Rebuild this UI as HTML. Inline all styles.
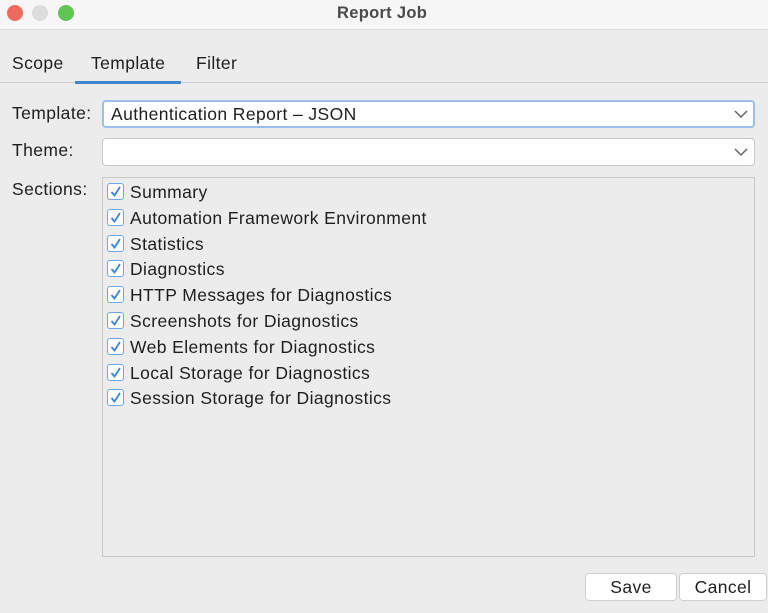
<!DOCTYPE html>
<html><head><style>
*{margin:0;padding:0;box-sizing:border-box}
body{width:768px;height:613px;background:#ececec;font-family:"Liberation Sans",sans-serif;color:#1e1e1e;position:relative;overflow:hidden}
.abs{position:absolute}
.title{left:0;top:0;width:768px;height:30px;background:#f6f6f6;border-bottom:1px solid #e0dcdc}
.dot{width:16px;height:16px;border-radius:50%;top:5px}
.t{font-size:17.5px;letter-spacing:0.4px;white-space:nowrap}
.combo{left:102px;width:653px;height:28px;background:#fff;border:1px solid #c8c8c8;border-radius:4px}
.cb{left:107px;width:17px;height:17px;border:1px solid #6fa6e6;border-radius:3px;background:#fff}
.btn{top:573px;height:28px;background:#fff;border:1px solid #cfcfcf;border-radius:4px;font-size:17.5px;letter-spacing:0.4px;text-align:center;line-height:26px}
</style></head><body>
<div class="abs title"></div>
<div class="abs dot" style="left:7px;background:#ec6a5e"></div>
<div class="abs dot" style="left:32px;background:#dcdcdc"></div>
<div class="abs dot" style="left:58px;background:#61c554"></div>
<div class="abs" style="left:337px;top:4px;font-size:16.5px;font-weight:bold;color:#4a4a4a;letter-spacing:0.3px">Report Job</div>
<div class="abs t" style="left:12px;top:53px">Scope</div>
<div class="abs t" style="left:91px;top:53px">Template</div>
<div class="abs t" style="left:196px;top:53px">Filter</div>
<div class="abs" style="left:0;top:82px;width:768px;height:1px;background:#cfcfcf"></div>
<div class="abs" style="left:75px;top:81px;width:106px;height:3px;background:#3f86d0"></div>
<div class="abs t" style="left:12px;top:103px">Template:</div>
<div class="abs t" style="left:12px;top:140px">Theme:</div>
<div class="abs t" style="left:12px;top:179px">Sections:</div>
<div class="abs combo" style="top:100px;border:2px solid #9cc0ea"></div>
<div class="abs t" style="left:111px;top:104px">Authentication Report – JSON</div>
<div class="abs combo" style="top:138px"></div>
<svg class="abs" style="left:733px;top:108px" width="16" height="12"><path d="M2 3 L8 9 L14 3" fill="none" stroke="#666" stroke-width="1.5"/></svg>
<svg class="abs" style="left:733px;top:146px" width="16" height="12"><path d="M2 3 L8 9 L14 3" fill="none" stroke="#666" stroke-width="1.5"/></svg>
<div class="abs" style="left:102px;top:177px;width:653px;height:380px;border:1px solid #c8c8c8;background:#ececec"></div>
<div id="list"></div>
<div class="abs btn" style="left:585px;width:92px">Save</div>
<div class="abs btn" style="left:679px;width:88px">Cancel</div>
<script>
var items=["Summary","Automation Framework Environment","Statistics","Diagnostics","HTTP Messages for Diagnostics","Screenshots for Diagnostics","Web Elements for Diagnostics","Local Storage for Diagnostics","Session Storage for Diagnostics"];
var h="";items.forEach(function(s,i){var y=183+i*25.8;
h+='<div class="abs cb" style="top:'+y+'px"><svg width="15" height="15" style="position:absolute;left:0;top:0"><path d="M3.5 8 L6.5 11.5 L12 3" fill="none" stroke="#3b82d9" stroke-width="1.8"/></svg></div>';
h+='<div class="abs t" style="left:130px;top:'+(y-1)+'px">'+s+'</div>';});
document.getElementById("list").innerHTML=h;
</script>
</body></html>
